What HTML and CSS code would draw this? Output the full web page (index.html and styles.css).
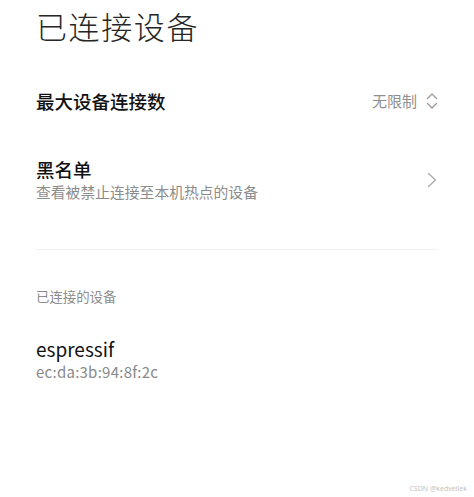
FILE: index.html
```html
<!DOCTYPE html>
<html lang="zh-CN">
<head>
<meta charset="utf-8">
<link rel="stylesheet" href="styles.css">
</head>
<body>
<div class="page">
  <h1 class="title">已连接设备</h1>

  <div class="row row-limit">
    <div class="row-main">
      <div class="row-title">最大设备连接数</div>
    </div>
    <div class="row-side">
      <span class="row-value">无限制</span>
      <svg class="icon-updown" width="12" height="18" viewBox="0 0 12 18" aria-hidden="true">
        <polyline points="1.5,6.5 6,2 10.5,6.5" fill="none" stroke="#9a9a9a" stroke-width="1.3" stroke-linecap="round" stroke-linejoin="round"/>
        <polyline points="1.5,11.5 6,16 10.5,11.5" fill="none" stroke="#9a9a9a" stroke-width="1.3" stroke-linecap="round" stroke-linejoin="round"/>
      </svg>
    </div>
  </div>

  <div class="row row-black">
    <div class="row-main">
      <div class="row-title">黑名单</div>
      <div class="row-sub">查看被禁止连接至本机热点的设备</div>
    </div>
    <div class="row-side">
      <svg class="icon-right" width="10" height="16" viewBox="0 0 10 16" aria-hidden="true">
        <polyline points="1.5,1.5 8.5,8 1.5,14.5" fill="none" stroke="#a8a8a8" stroke-width="1.3" stroke-linecap="round" stroke-linejoin="round"/>
      </svg>
    </div>
  </div>

  <div class="divider"></div>

  <div class="section-label">已连接的设备</div>

  <div class="device">
    <div class="device-name">espressif</div>
    <div class="device-mac">ec:da:3b:94:8f:2c</div>
  </div>
</div>
<div class="watermark">CSDN @kedvellek</div>
</body>
</html>
```

FILE: styles.css
```css
html, body {
  margin: 0;
  padding: 0;
  background: #ffffff;
}

body {
  position: relative;
  width: 474px;
  height: 497px;
  overflow: hidden;
  font-family: "Noto Sans CJK SC", "Noto Sans", sans-serif;
  color: #111111;
}

.page {
  padding: 6px 36px 0 36px;
}

.title {
  margin: 0;
  font-size: 31px;
  line-height: 40px;
  font-weight: 300;
  color: #262626;
  letter-spacing: 1.6px;
}

.row {
  display: flex;
  align-items: center;
  justify-content: space-between;
}

.row-limit {
  margin-top: 42px;
}

.row-black {
  margin-top: 43px;
}

.row-title {
  font-size: 18.5px;
  line-height: 26px;
  font-weight: 500;
  color: #111111;
}

.row-black .row-title {
  line-height: 24px;
}

.row-sub {
  font-size: 14.8px;
  line-height: 22px;
  color: #8c8c8c;
}

.row-side {
  display: flex;
  align-items: center;
  gap: 9px;
}

.row-value {
  font-size: 15px;
  line-height: 22px;
  color: #8f8f8f;
}

.icon-updown {
  display: block;
}

.icon-right {
  display: block;
  margin-right: 1px;
}

.divider {
  margin-top: 46px;
  height: 1px;
  background: #efefef;
}

.section-label {
  margin-top: 36px;
  font-size: 13.4px;
  line-height: 20px;
  color: #8c8c8c;
}

.device {
  margin-top: 30px;
}

.device-name {
  font-size: 19px;
  line-height: 26px;
  color: #111111;
}

.device-mac {
  font-size: 15px;
  line-height: 20px;
  letter-spacing: 0.25px;
  color: #8a8a8a;
}

.watermark {
  position: absolute;
  right: 7px;
  bottom: 3px;
  font-family: "Noto Sans", sans-serif;
  font-size: 7px;
  line-height: 10px;
  color: #c4c4c4;
}
```
